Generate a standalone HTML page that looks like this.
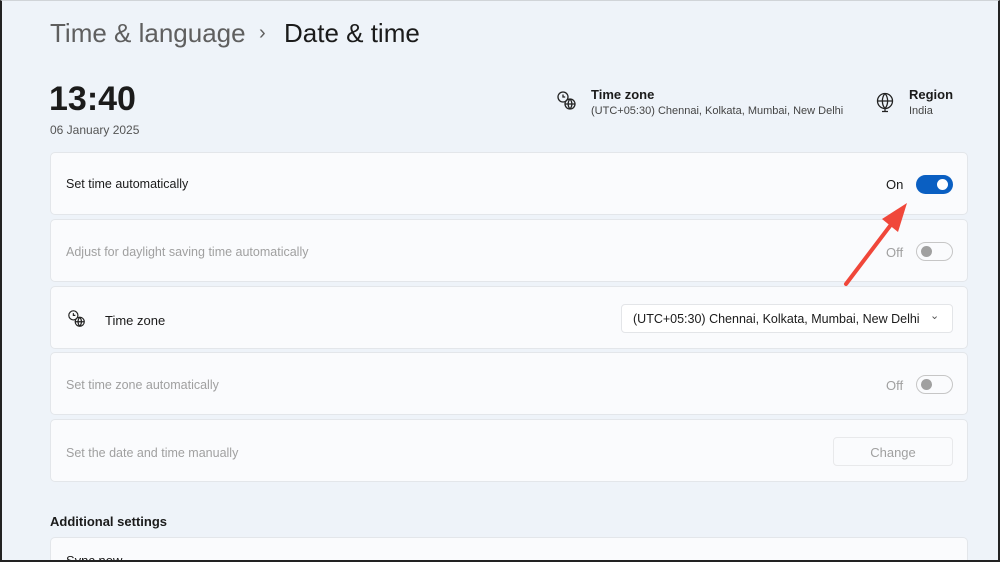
<!DOCTYPE html>
<html><head><meta charset="utf-8"><style>
*{box-sizing:border-box;margin:0;padding:0}
html{overflow:hidden;height:562px}
body{width:1000px;height:562px;overflow:hidden;background:#eef3f9;font-family:"Liberation Sans",sans-serif;position:relative;color:#1b1b1b}
.frame{position:absolute;left:0;top:0;width:1000px;height:562px;border-left:2px solid #222;border-right:2px solid #222;border-bottom:2px solid #222;border-top:1px solid #d0d4d8;z-index:10;pointer-events:none}
.abs{position:absolute}
.card{position:absolute;left:50px;width:918px;background:#fafbfd;border:1px solid #e3e6ea;border-radius:5px}
.lbl{position:absolute;left:15px;font-size:13px}
.dim{color:#a0a0a0}
.tog{position:absolute;width:37px;height:19px;border-radius:10px}
</style></head><body>
<div class="frame"></div>
<div class="abs" style="left:50px;top:18px;font-size:26px;color:#5f5f5f">Time &amp; language</div>
<div class="abs" style="left:259px;top:22px;font-size:20px;color:#5f5f5f">›</div>
<div class="abs" style="left:284px;top:18px;font-size:26px;color:#1b1b1b">Date &amp; time</div>
<div class="abs" style="left:49px;top:80px;font-size:34px;font-weight:bold">13:40</div>
<div class="abs" style="left:50px;top:123px;font-size:12px;color:#555">06 January 2025</div>

<svg class="abs" style="left:556px;top:90px" width="22" height="22" viewBox="0 0 22 22" fill="none" stroke="#222" stroke-width="1.3"><circle cx="7" cy="7" r="5"/><path d="M7 4.5V7h2.2"/><circle cx="14" cy="14" r="5" fill="#eef3f9"/><path d="M9 14h10M14 9c-2.5 3-2.5 7 0 10M14 9c2.5 3 2.5 7 0 10"/></svg>
<div class="abs" style="left:591px;top:87px;font-size:13px;font-weight:bold">Time zone</div>
<div class="abs" style="left:591px;top:105px;font-size:11px;color:#444">(UTC+05:30) Chennai, Kolkata, Mumbai, New Delhi</div>
<svg class="abs" style="left:875px;top:91px" width="20" height="22" viewBox="0 0 20 22" fill="none" stroke="#222" stroke-width="1.3"><circle cx="10" cy="10" r="7.5"/><path d="M2.5 10h15M10 2.5c-3.5 4-3.5 11 0 15M10 2.5c3.5 4 3.5 11 0 15M10 17.5v3M7 20.5h6"/></svg>
<div class="abs" style="left:909px;top:87px;font-size:13px;font-weight:bold">Region</div>
<div class="abs" style="left:909px;top:105px;font-size:11px;color:#444">India</div>

<div class="card" style="top:152px;height:63px">
<div class="lbl" style="top:24px;font-size:12.5px">Set time automatically</div>
<div class="abs" style="left:835px;top:24px;font-size:13px">On</div>
<div class="tog" style="left:865px;top:22px;background:#0a5fc2"><div class="abs" style="left:21px;top:4px;width:11px;height:11px;border-radius:50%;background:#fff"></div></div>
</div>
<div class="card" style="top:219px;height:63px">
<div class="lbl dim" style="top:25px;font-size:12.5px">Adjust for daylight saving time automatically</div>
<div class="abs dim" style="left:835px;top:25px;font-size:13px">Off</div>
<div class="tog" style="left:865px;top:22px;border:1px solid #c6c6c6"><div class="abs" style="left:4px;top:3px;width:11px;height:11px;border-radius:50%;background:#a0a0a0"></div></div>
</div>
<div class="card" style="top:286px;height:63px">
<svg class="abs" style="left:16px;top:22px" width="20" height="20" viewBox="0 0 22 22" fill="none" stroke="#222" stroke-width="1.3"><circle cx="7" cy="7" r="5"/><path d="M7 4.5V7h2.2"/><circle cx="14" cy="14" r="5" fill="#fafbfd"/><path d="M9 14h10M14 9c-2.5 3-2.5 7 0 10M14 9c2.5 3 2.5 7 0 10"/></svg>
<div class="abs" style="left:54px;top:26px;font-size:13px">Time zone</div>
<div class="abs" style="left:570px;top:17px;width:332px;height:29px;background:#fff;border:1px solid #e3e5e8;border-radius:4px;font-size:12.5px;padding:7px 0 0 11px">(UTC+05:30) Chennai, Kolkata, Mumbai, New Delhi<span class="abs" style="left:308px;top:4px;font-size:11px;color:#555">⌄</span></div>
</div>
<div class="card" style="top:352px;height:63px">
<div class="lbl dim" style="top:25px;font-size:12.5px">Set time zone automatically</div>
<div class="abs dim" style="left:835px;top:25px;font-size:13px">Off</div>
<div class="tog" style="left:865px;top:22px;border:1px solid #c6c6c6"><div class="abs" style="left:4px;top:3px;width:11px;height:11px;border-radius:50%;background:#a0a0a0"></div></div>
</div>
<div class="card" style="top:419px;height:63px">
<div class="lbl dim" style="top:26px;font-size:12.5px">Set the date and time manually</div>
<div class="abs" style="left:782px;top:17px;width:120px;height:29px;border:1px solid #e8e9eb;border-radius:4px;font-size:13px;color:#a0a0a0;text-align:center;padding-top:7px">Change</div>
</div>
<div class="abs" style="left:50px;top:514px;font-size:13px;font-weight:bold">Additional settings</div>
<div class="card" style="top:537px;height:23px;overflow:hidden;border-bottom:none;border-radius:5px 5px 0 0"><div class="lbl" style="top:15px">Sync now</div></div>

<svg class="abs" style="left:835px;top:196px;z-index:5" width="80" height="95" viewBox="0 0 80 95"><path d="M11 88L58 26" stroke="#f0473a" stroke-width="4" stroke-linecap="round"/><path d="M72 7L47 23L63 36Z" fill="#f0473a"/></svg>
</body></html>
